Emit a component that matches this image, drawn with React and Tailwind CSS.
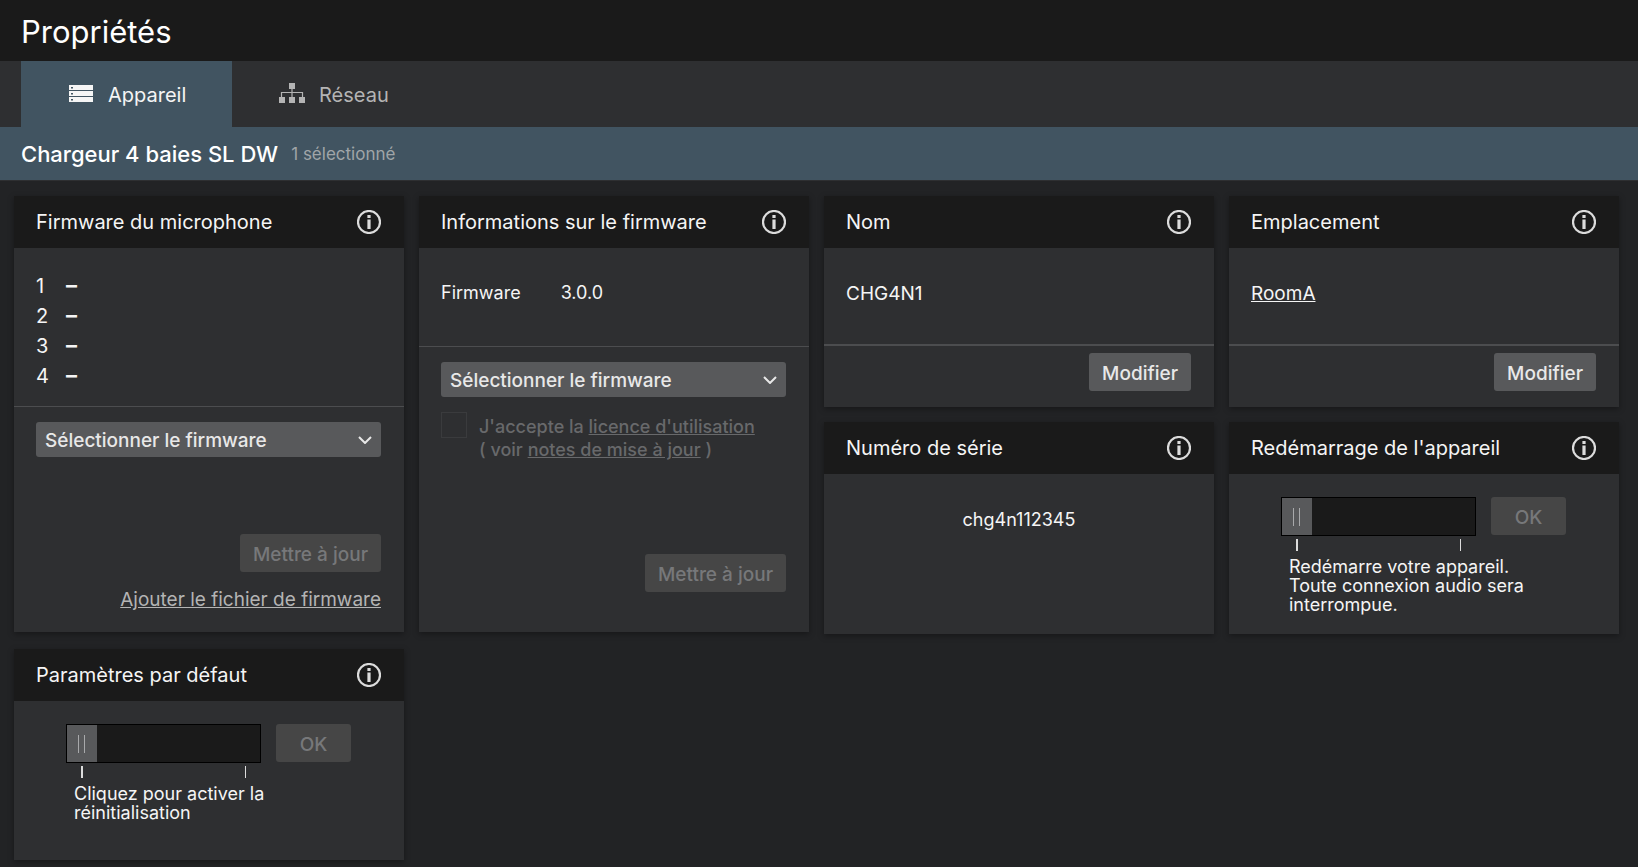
import React from "react";

function InfoIcon() {
  return (
    <svg viewBox="0 0 24 24" className="size-6" fill="none" aria-hidden="true">
      <circle cx="12" cy="12" r="11" stroke="currentColor" strokeWidth="2.2" />
      <rect x="10.4" y="5" width="3.2" height="3" fill="currentColor" />
      <rect x="10.4" y="9.5" width="3.2" height="9.5" fill="currentColor" />
    </svg>
  );
}

function DeviceIcon() {
  return (
    <svg viewBox="0 0 24 17" className="mb-px h-[17px] w-6" aria-hidden="true">
      {[0, 6, 12].map((y) => (
        <g key={y}>
          <rect x="0" y={y} width="24" height="5" fill="currentColor" />
          <rect x="2" y={y + 2} width="2" height="1.5" fill="#415461" />
        </g>
      ))}
    </svg>
  );
}

function NetworkIcon() {
  return (
    <svg viewBox="0 0 26 20" className="mb-0.5 h-5 w-[26px]" fill="currentColor" aria-hidden="true">
      <rect x="10" y="0" width="6" height="6" />
      <rect x="0" y="14" width="6" height="6" />
      <rect x="10" y="14" width="6" height="6" />
      <rect x="20" y="14" width="6" height="6" />
      <path d="M2.5 14V9.5H23.5V14M13 6V14" fill="none" stroke="currentColor" strokeWidth="1.2" />
    </svg>
  );
}

function Card({ title, className = "", children }) {
  return (
    <section className={`flex flex-col bg-[#2e2f31] shadow-[0_2px_6px_rgba(0,0,0,0.35)] ${className}`}>
      <header className="flex h-[52px] shrink-0 items-center justify-between bg-[#1a1a1a] pr-[23px] pl-[22px]">
        <h2 className="text-xl text-[#f5f5f5]">{title}</h2>
        <button type="button" aria-label={`Informations : ${title}`} className="text-[#dcdcdc]">
          <InfoIcon />
        </button>
      </header>
      {children}
    </section>
  );
}

function FirmwareSelect({ label }) {
  return (
    <div className="grid items-center">
      <select
        aria-label={label}
        className="col-start-1 row-start-1 h-[35px] w-full appearance-none rounded-[3px] bg-[#58595b] pt-[3px] pr-9 pl-[9px] text-[19px] font-medium text-[#e8e8e8]"
      >
        <option>Sélectionner le firmware</option>
      </select>
      <svg
        viewBox="0 0 14 8"
        className="pointer-events-none col-start-1 row-start-1 mr-[9px] h-2 w-3.5 justify-self-end text-[#e8e8e8]"
        fill="none"
        aria-hidden="true"
      >
        <path d="M1 1L7 7L13 1" stroke="currentColor" strokeWidth="2" />
      </svg>
    </div>
  );
}

function ActionButton({ disabled, className = "px-[13px]", children }) {
  const tone = disabled ? "bg-[#464646] text-[#77787a]" : "bg-[#58595b] text-[#e8e8e8]";
  return (
    <button
      type="button"
      disabled={disabled}
      className={`h-[38px] rounded-[3px] pt-1 text-[19px] font-medium ${tone} ${className}`}
    >
      {children}
    </button>
  );
}

function SlideToConfirm({ label, children }) {
  return (
    <div className="flex gap-[15px] px-[52px] pt-[23px]">
      <div className="w-[195px] shrink-0">
        <input
          type="range"
          min="0"
          max="100"
          defaultValue="0"
          aria-label={label}
          className="block h-[39px] w-full appearance-none border border-black bg-[#1a1a1a] [&::-webkit-slider-thumb]:h-[37px] [&::-webkit-slider-thumb]:w-[30px] [&::-webkit-slider-thumb]:appearance-none [&::-webkit-slider-thumb]:bg-[#58595b] [&::-webkit-slider-thumb]:bg-[linear-gradient(90deg,#a8a9ab_1px,transparent_1px,transparent_6px,#a8a9ab_6px)] [&::-webkit-slider-thumb]:bg-[length:7px_18px] [&::-webkit-slider-thumb]:bg-[position:11px_center] [&::-webkit-slider-thumb]:bg-no-repeat"
        />
        <div className="flex justify-between pt-[3px] pr-[15px] pl-[15px]">
          <span className="h-3 w-0.5 bg-[#dcdcdc]" />
          <span className="h-3 w-px bg-[#dcdcdc]" />
        </div>
        <p className="mt-1.5 ml-2 w-[240px] text-lg leading-[19px] text-[#f5f5f5]">{children}</p>
      </div>
      <ActionButton disabled className="w-[75px]">
        OK
      </ActionButton>
    </div>
  );
}

export default function App() {
  return (
    <div className="min-h-screen bg-[#222325] font-['Inter','Liberation_Sans',sans-serif] text-[#f5f5f5]">
      <header className="flex h-[61px] items-center bg-[#1a1a1a] px-[21px] pt-1">
        <h1 className="text-[31px] text-white">Propriétés</h1>
      </header>

      <nav className="flex h-[66px] bg-[#2e2f31] pl-[21px]">
        <a href="#appareil" className="flex w-[211px] items-center gap-[15px] bg-[#415461] pl-12 text-xl">
          <DeviceIcon />
          <span className="pt-0.5">Appareil</span>
        </a>
        <a href="#reseau" className="flex items-center gap-3.5 px-[47px] text-xl text-[#b4b4b4]">
          <NetworkIcon />
          <span className="pt-0.5">Réseau</span>
        </a>
      </nav>

      <div className="flex h-[54px] items-center gap-[13px] border-b border-[#2e2f31] bg-[#415461] px-[21px] pt-0.5">
        <strong className="text-[22px] font-medium text-white">Chargeur 4 baies SL DW</strong>
        <span className="text-[17px] text-[#a0a5a8]">1 sélectionné</span>
      </div>

      <main className="grid grid-cols-4 grid-rows-[minmax(211px,auto)_minmax(212px,auto)_minmax(211px,auto)] items-stretch gap-[15px] pt-[15px] pr-[19px] pl-3.5">
        <Card title="Firmware du microphone" className="row-span-2 mb-0.5">
          <ul className="border-b border-[#4c4d4f] px-[22px] pt-[23px] pb-[15px] text-xl">
            {[1, 2, 3, 4].map((bay) => (
              <li key={bay} className="flex h-[30px] items-center">
                <span className="w-[30px]">{bay}</span>
                <span className="pb-0.5 text-[22px] font-bold">–</span>
              </li>
            ))}
          </ul>
          <div className="flex flex-1 flex-col pt-[15px] pr-[23px] pb-[18px] pl-[22px]">
            <FirmwareSelect label="Firmware du microphone" />
            <div className="mt-auto flex flex-col items-end gap-[13px]">
              <ActionButton disabled>Mettre à jour</ActionButton>
              <a href="#ajouter" className="text-[19px] leading-[29px] text-[#b4b4b4] underline">
                Ajouter le fichier de firmware
              </a>
            </div>
          </div>
        </Card>

        <Card title="Informations sur le firmware" className="row-span-2 mb-0.5">
          <dl className="flex h-[99px] gap-10 border-b border-[#4c4d4f] px-[22px] pt-[31px] text-lg">
            <dt>Firmware</dt>
            <dd>3.0.0</dd>
          </dl>
          <div className="flex flex-1 flex-col pt-[15px] pr-[23px] pb-10 pl-[22px]">
            <FirmwareSelect label="Informations sur le firmware" />
            <div className="mt-[15px] flex gap-3 text-lg leading-[23px] font-medium text-[#68696b]">
              <input
                id="licence"
                type="checkbox"
                disabled
                className="size-[26px] shrink-0 appearance-none border border-[#3a3b3d]"
              />
              <label htmlFor="licence" className="pt-[3px]">
                J'accepte la{" "}
                <a href="#licence" className="underline">
                  licence d'utilisation
                </a>
                <br />( voir{" "}
                <a href="#notes" className="underline">
                  notes de mise à jour
                </a>{" "}
                )
              </label>
            </div>
            <div className="mt-auto flex justify-end">
              <ActionButton disabled>Mettre à jour</ActionButton>
            </div>
          </div>
        </Card>

        <Card title="Nom">
          <p className="h-[98px] border-b-2 border-[#4c4d4f] px-[22px] pt-8 text-[19px]">CHG4N1</p>
          <div className="flex justify-end pt-[7px] pr-[23px]">
            <ActionButton>Modifier</ActionButton>
          </div>
        </Card>

        <Card title="Emplacement">
          <p className="h-[98px] border-b-2 border-[#4c4d4f] px-[22px] pt-8 text-[19px]">
            <a href="#room" className="underline">
              RoomA
            </a>
          </p>
          <div className="flex justify-end pt-[7px] pr-[23px]">
            <ActionButton>Modifier</ActionButton>
          </div>
        </Card>

        <Card title="Numéro de série">
          <p className="pt-8 text-center text-lg">chg4n112345</p>
        </Card>

        <Card title="Redémarrage de l'appareil">
          <SlideToConfirm label="Redémarrage de l'appareil">
            Redémarre votre appareil. Toute connexion audio sera interrompue.
          </SlideToConfirm>
        </Card>

        <Card title="Paramètres par défaut">
          <SlideToConfirm label="Paramètres par défaut">Cliquez pour activer la réinitialisation</SlideToConfirm>
        </Card>
      </main>
    </div>
  );
}
